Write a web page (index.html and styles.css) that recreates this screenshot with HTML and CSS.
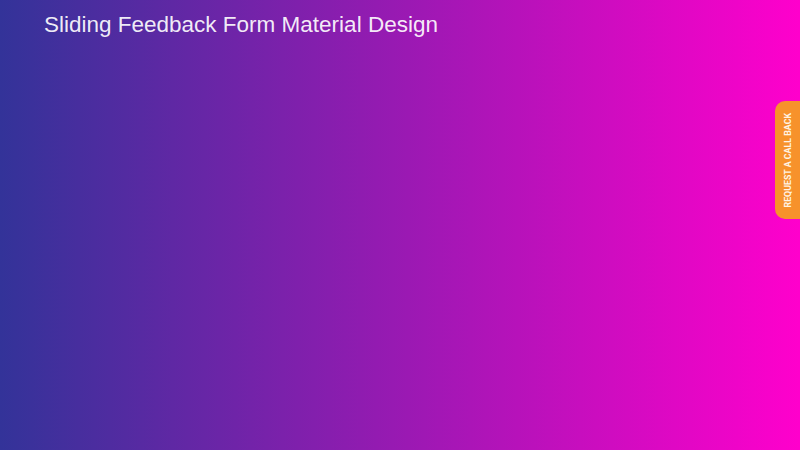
FILE: index.html
```html
<!DOCTYPE html>
<html>
<head>
<meta charset="utf-8">
<link rel="stylesheet" href="styles.css">
</head>
<body>
<h1 class="title">Sliding Feedback Form Material Design</h1>
<button class="callback-tab"><span class="callback-label">REQUEST A CALL BACK</span></button>
</body>
</html>
```
FILE: styles.css
```css
html, body {
  margin: 0;
  height: 100%;
}
body {
  background: linear-gradient(to right, #333399, #ff00cc);
  font-family: "Liberation Sans", Arial, sans-serif;
  overflow: hidden;
}
.title {
  margin: 0;
  padding: 11px 0 0 44px;
  font-size: 22.5px;
  font-weight: normal;
  line-height: 27px;
  color: rgba(255, 255, 255, 0.92);
}
.callback-tab {
  position: fixed;
  right: 0;
  top: 101px;
  width: 25px;
  height: 118px;
  padding: 0;
  border: none;
  border-radius: 10px 0 0 10px;
  background: #f7922b;
  display: flex;
  align-items: center;
  justify-content: center;
}
.callback-label {
  writing-mode: vertical-rl;
  transform: rotate(180deg);
  font-family: Roboto, "Liberation Sans", sans-serif;
  font-weight: bold;
  font-size: 8.8px;
  color: #fff3e3;
  letter-spacing: 0;
  white-space: nowrap;
}
```
